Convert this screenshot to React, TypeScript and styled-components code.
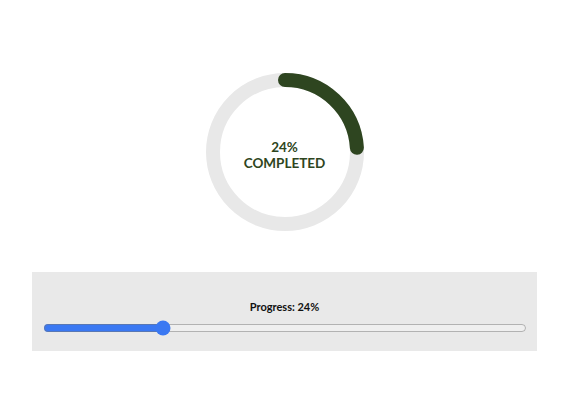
import React, { useState } from "react";
import styled, { createGlobalStyle } from "styled-components";

const GlobalStyle = createGlobalStyle`
  body {
    margin: 0;
    background: #ffffff;
    font-family: Lato, "Open Sans", sans-serif;
  }
`;

const SIZE = 158;
const STROKE = 14;
const RADIUS = (SIZE - STROKE) / 2;
const CIRC = 2 * Math.PI * RADIUS;

const Page = styled.div`
  display: flex;
  flex-direction: column;
  align-items: center;
  padding-top: 73px;
  padding-right: 1px;
`;

const Ring = styled.div`
  position: relative;
  width: ${SIZE}px;
  height: ${SIZE}px;
`;

const Label = styled.div`
  position: absolute;
  inset: 0;
  display: flex;
  align-items: center;
  justify-content: center;
  text-align: center;
  color: #2e4520;
  font-size: 13.5px;
  font-weight: 700;
  line-height: 16px;
  padding-top: 5px;
`;

const Panel = styled.div`
  margin-top: 41px;
  width: 505px;
  height: 79px;
  box-sizing: border-box;
  background: #e9e9e9;
  display: flex;
  flex-direction: column;
  align-items: center;
  padding-top: 28px;
`;

const Caption = styled.div`
  font-size: 11px;
  font-weight: 700;
  color: #111;
  line-height: 14px;
`;

const Range = styled.input`
  width: 484px;
  margin: 6px 0 0;
  accent-color: #3a78f2;
`;

export default function App() {
  const [progress, setProgress] = useState(24);
  const offset = CIRC * (1 - progress / 100);

  return (
    <>
      <GlobalStyle />
      <Page>
        <Ring>
          <svg width={SIZE} height={SIZE}>
            <circle
              cx={SIZE / 2}
              cy={SIZE / 2}
              r={RADIUS}
              fill="none"
              stroke="#e8e8e8"
              strokeWidth={STROKE}
            />
            <circle
              cx={SIZE / 2}
              cy={SIZE / 2}
              r={RADIUS}
              fill="none"
              stroke="#2e4520"
              strokeWidth={STROKE}
              strokeLinecap="round"
              strokeDasharray={CIRC}
              strokeDashoffset={offset}
              transform={`rotate(-90 ${SIZE / 2} ${SIZE / 2})`}
            />
          </svg>
          <Label>
            {progress}%
            <br />
            COMPLETED
          </Label>
        </Ring>
        <Panel>
          <Caption>Progress: {progress}%</Caption>
          <Range
            type="range"
            min={0}
            max={100}
            value={progress}
            onChange={(e) => setProgress(Number(e.target.value))}
          />
        </Panel>
      </Page>
    </>
  );
}
